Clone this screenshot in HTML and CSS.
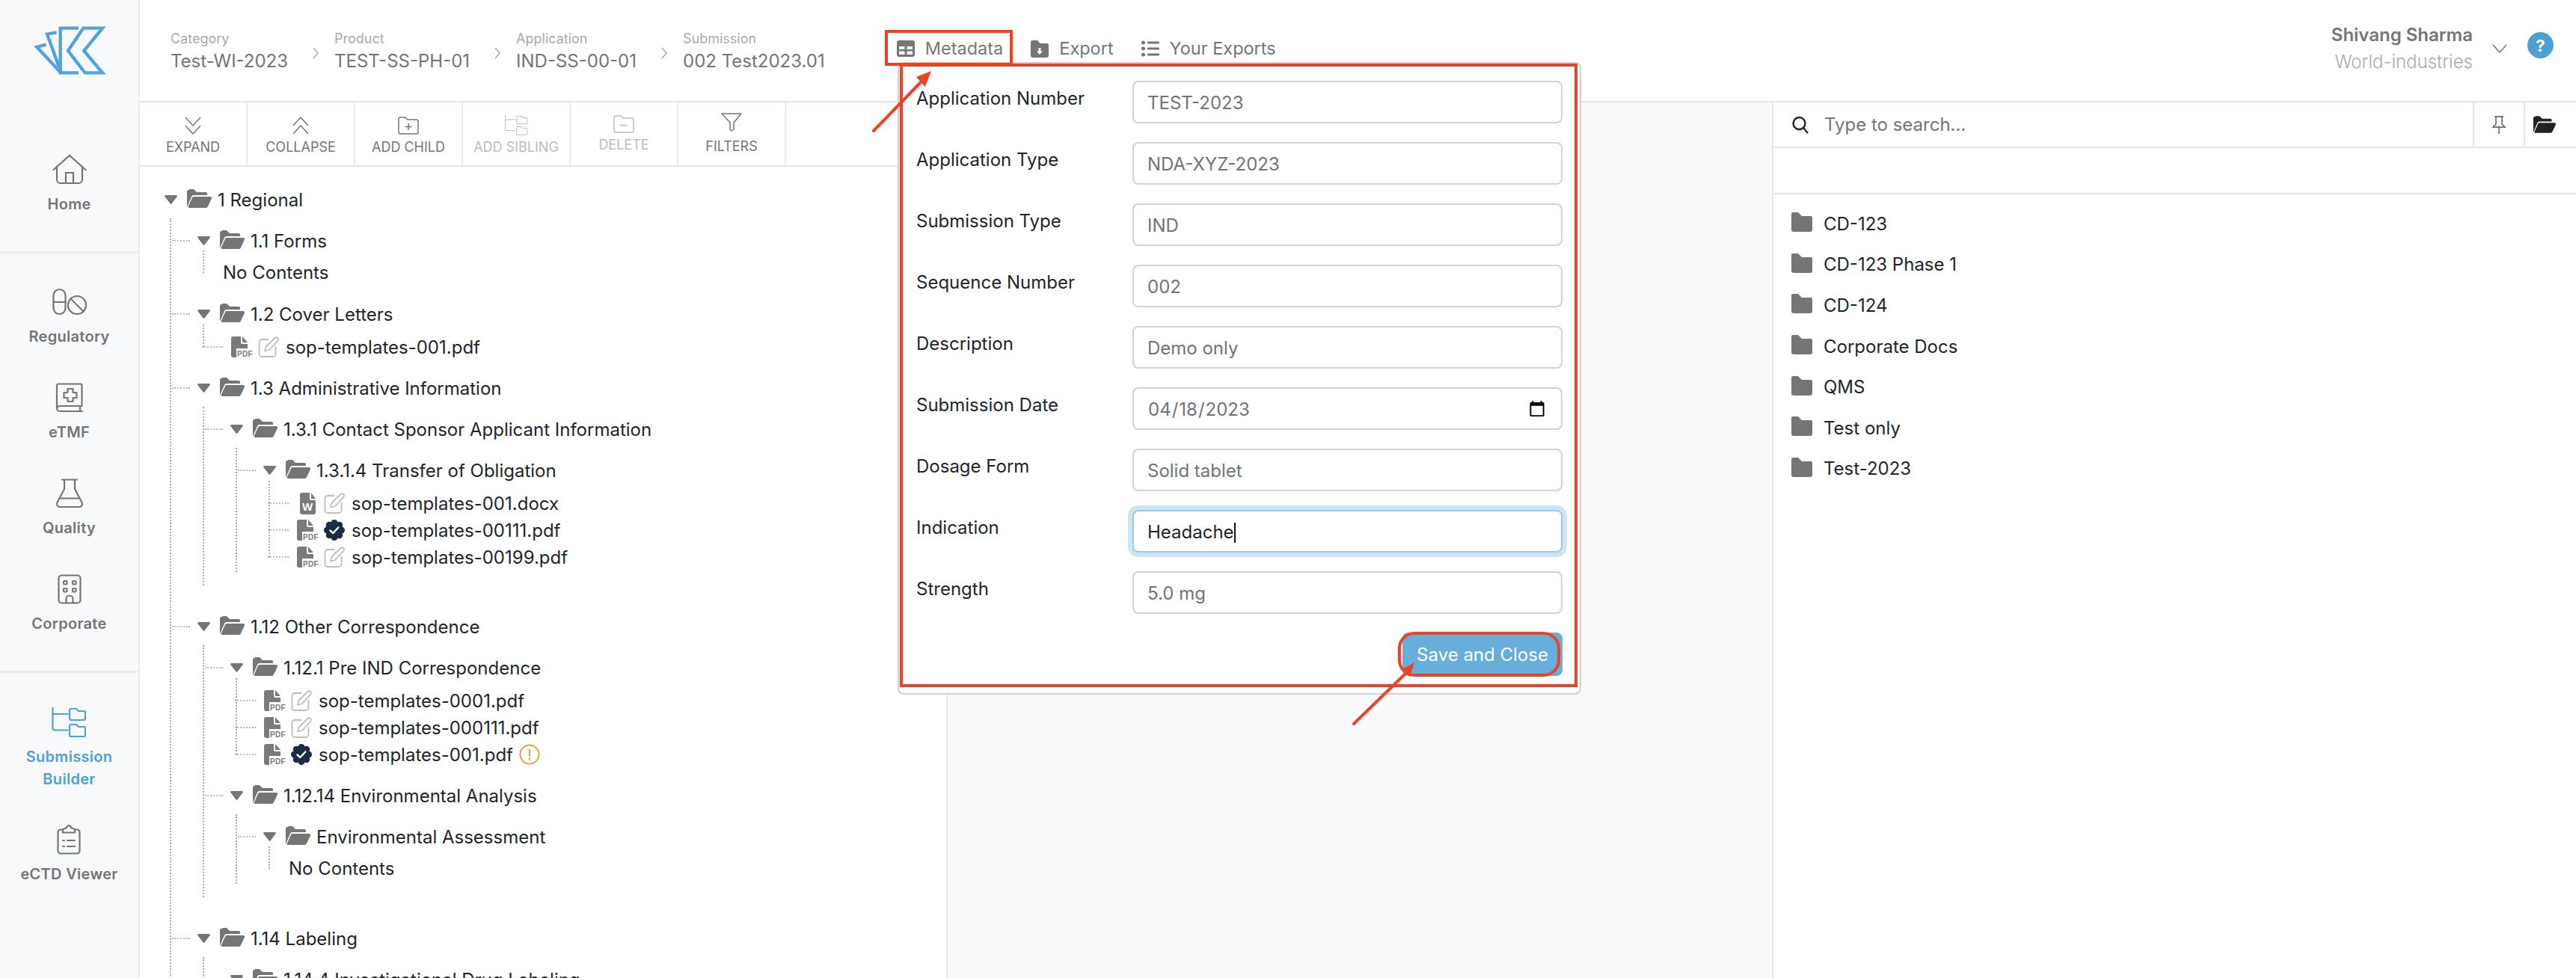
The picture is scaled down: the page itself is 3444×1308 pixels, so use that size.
FILE: index.html
```html
<!DOCTYPE html>
<html lang="en">
<head>
<meta charset="utf-8">
<title>Submission Builder</title>
<link rel="stylesheet" href="styles.css">
</head>
<body>
<svg class="defs" width="0" height="0" aria-hidden="true">
  <symbol id="folder-open" viewBox="0 0 33 25"><path d="M0 3a2 2 0 0 1 2-2h1V0h6l4 4h12a2 2 0 0 1 2 2v2H9a3 3 0 0 0-3 2L0 24z"/><path d="M9 10h22a2 2 0 0 1 2 2.600L28 23a3 3 0 0 1-3 2H3a2 2 0 0 1-1.500-1.500L7 11.500A2 2 0 0 1 9 10z"/></symbol>
  <symbol id="folder-closed" viewBox="0 0 28 26"><path d="M0 2a2 2 0 0 1 2-2h7l5 5h12a2 2 0 0 1 2 2v16a3 3 0 0 1-3 3H3a3 3 0 0 1-3-3z"/></symbol>
  <symbol id="caret" viewBox="0 0 17 12"><path d="M1.500 0h14a1.300 1.300 0 0 1 1 2.200L9.500 11.200a1.200 1.200 0 0 1-2 0L.500 2.200a1.300 1.300 0 0 1 1-2.200z"/></symbol>
  <symbol id="pdf" viewBox="0 0 28 29"><path fill="#7a7a7a" d="M3 0h10v8a2 2 0 0 0 2 2h7v18H3a3 3 0 0 1-3-3V3a3 3 0 0 1 3-3zM15 0l7 8h-7z"/><rect x="7" y="16" width="21" height="13" fill="#fff"/></symbol>
  <symbol id="word" viewBox="0 0 21 29"><path fill="#7a7a7a" d="M3 0h10v8a2 2 0 0 0 2 2h6v16a3 3 0 0 1-3 3H3a3 3 0 0 1-3-3V3a3 3 0 0 1 3-3zM15 0l6 8h-6z"/></symbol>
  <symbol id="edit" viewBox="0 0 28 28"><g fill="none" stroke="#bdbdbd" stroke-width="1.800" stroke-linejoin="round"><path d="M14 4H5a3.500 3.500 0 0 0-3.500 3.500v16A3.500 3.500 0 0 0 5 27h15a3.500 3.500 0 0 0 3.500-3.500V13"/><path d="M9 19.500l1.500-6L22.500 2c1.200-1 2.700-.8 3.700.2s1.100 2.600 0 3.700L15 18z"/></g></symbol>
  <symbol id="badge" viewBox="0 0 28 28"><g fill="#1a2b44"><circle cx="14" cy="14" r="11"/><circle cx="14" cy="4.500" r="4.500"/><circle cx="14" cy="23.500" r="4.500"/><circle cx="4.500" cy="14" r="4.500"/><circle cx="23.500" cy="14" r="4.500"/><circle cx="7.300" cy="7.300" r="4.500"/><circle cx="20.700" cy="7.300" r="4.500"/><circle cx="7.300" cy="20.700" r="4.500"/><circle cx="20.700" cy="20.700" r="4.500"/></g><path d="M8.500 14.500l3.800 3.500 7-7.500" fill="none" stroke="#fff" stroke-width="2.400" stroke-linecap="round" stroke-linejoin="round"/></symbol>
  <symbol id="builder" viewBox="0 0 46 40"><path d="M1.500 0v28a2.500 2.500 0 0 0 2.500 2.500h17.500M1.500 9h20M24 4a2 2 0 0 1 2-2h7l3 3h7a2 2 0 0 1 2 2v8a2 2 0 0 1-2 2H26a2 2 0 0 1-2-2zM24 25a2 2 0 0 1 2-2h7l3 3h7a2 2 0 0 1 2 2v9a2 2 0 0 1-2 2H26a2 2 0 0 1-2-2z"/></symbol>
</svg>

<div class="app">
  <nav class="sidebar">
    <section class="side-section side-top">
      <svg class="logo" viewBox="120 100 300 210" width="100" height="70"><g fill="none" stroke="#50a2da" stroke-width="13"><path d="M325 114H402L328 205 402 293H332L264 205z"/><path d="M306 114H233V293H306"/><path d="M218 131L180 138 228 270"/><path d="M176 180L139 190 235 293"/></g></svg>
      <a class="nav-item">
        <svg class="nav-icon" viewBox="-4 0 48 40" width="48" height="40"><path d="M-1.500 20L20 1 41.500 20M3 16v17a5 5 0 0 0 5 5h24a5 5 0 0 0 5-5V16M15 38V24h10v14"/></svg>
        <span>Home</span>
      </a>
    </section>
    <section class="side-section side-mid">
      <a class="nav-item">
        <svg class="nav-icon" viewBox="0 0 52 40" width="52" height="40"><rect x="4.500" y="3" width="16" height="33" rx="8"/><path d="M4.500 20h16"/><circle cx="36" cy="24" r="12"/><path d="M27.500 15.500l17 17"/></svg>
        <span>Regulatory</span>
      </a>
      <a class="nav-item">
        <svg class="nav-icon" viewBox="0 0 40 40" width="40" height="40"><path d="M36.500 31V3.500a2 2 0 0 0-2-2H5a2 2 0 0 0-2 2V34a4 4 0 0 0 4 4h30M3 35a4 4 0 0 1 4-4h29.500M34 31v7"/><path d="M17.500 8h7v5h5v7h-5v5h-7v-5h-5v-7h5z" stroke-linejoin="round"/></svg>
        <span>eTMF</span>
      </a>
      <a class="nav-item">
        <svg class="nav-icon" viewBox="0 0 40 40" width="40" height="40"><path d="M10 1.500h20M13 1.500V14L3.500 32a4 4 0 0 0 3.500 6h26a4 4 0 0 0 3.500-6L27 14V1.500M7.500 26.500h25"/></svg>
        <span>Quality</span>
      </a>
      <a class="nav-item">
        <svg class="nav-icon" viewBox="0 0 40 40" width="40" height="40"><rect x="5.500" y="1.500" width="29" height="37" rx="4"/><rect x="12" y="9" width="4.500" height="4.500" rx="1"/><rect x="24" y="9" width="4.500" height="4.500" rx="1"/><rect x="12" y="19" width="4.500" height="4.500" rx="1"/><rect x="24" y="19" width="4.500" height="4.500" rx="1"/><path d="M15.500 38V33a4.500 4.500 0 0 1 9 0v5"/></svg>
        <span>Corporate</span>
      </a>
    </section>
    <section class="side-section side-bottom">
      <a class="nav-item nav-active">
        <svg class="nav-icon" width="46" height="40"><use href="#builder"/></svg>
        <span>Submission<br>Builder</span>
      </a>
      <a class="nav-item">
        <svg class="nav-icon" viewBox="0 0 40 40" width="40" height="40"><path d="M12 6.500H9a3.500 3.500 0 0 0-3.500 3.500v25A3.500 3.500 0 0 0 9 38.500h22a3.500 3.500 0 0 0 3.500-3.500V10A3.500 3.500 0 0 0 31 6.500h-3"/><path d="M12 10.500V6l4.500-1.500C17.500 2 19 1 20 1s2.500 1 3.500 3.500L28 6v4.500z" stroke-linejoin="round"/><path d="M18 21h10M18 29h10M12 21h2M12 29h2"/></svg>
        <span>eCTD Viewer</span>
      </a>
    </section>
  </nav>

  <div class="main">
    <header class="topbar">
      <div class="crumbs">
        <div class="crumb"><small>Category</small><strong>Test-WI-2023</strong></div>
        <svg class="crumb-sep" viewBox="0 0 10 16" width="10" height="16"><path d="M2 1l6 7-6 7"/></svg>
        <div class="crumb"><small>Product</small><strong>TEST-SS-PH-01</strong></div>
        <svg class="crumb-sep" viewBox="0 0 10 16" width="10" height="16"><path d="M2 1l6 7-6 7"/></svg>
        <div class="crumb"><small>Application</small><strong>IND-SS-00-01</strong></div>
        <svg class="crumb-sep" viewBox="0 0 10 16" width="10" height="16"><path d="M2 1l6 7-6 7"/></svg>
        <div class="crumb"><small>Submission</small><strong>002 Test2023.01</strong></div>
      </div>
      <div class="tabs">
        <a class="tab"><svg viewBox="0 0 24 24" width="24" height="24"><path fill-rule="evenodd" d="M3 1h18a3 3 0 0 1 3 3v16a3 3 0 0 1-3 3H3a3 3 0 0 1-3-3V4a3 3 0 0 1 3-3zm0 8v4h7.500V9zm10.500 0v4H21V9zM3 15.500V20h7.500v-4.500zm10.500 0V20H21v-4.500z"/></svg>Metadata</a>
        <a class="tab"><svg viewBox="0 0 24 24" width="24" height="24"><path fill-rule="evenodd" d="M0 3a2 2 0 0 1 2-2h7l3.500 4H21a3 3 0 0 1 3 3v13a3 3 0 0 1-3 3H3a3 3 0 0 1-3-3zm10.500 8v4.500H8l4 4.500 4-4.500h-2.500V11z"/></svg>Export</a>
        <a class="tab"><svg viewBox="0 0 24 24" width="24" height="24"><circle cx="2.500" cy="4" r="2.500"/><circle cx="2.500" cy="12" r="2.500"/><circle cx="2.500" cy="20" r="2.500"/><rect x="8" y="2.500" width="16" height="3" rx="1"/><rect x="8" y="10.500" width="16" height="3" rx="1"/><rect x="8" y="18.500" width="16" height="3" rx="1"/></svg>Your Exports</a>
      </div>
      <div class="account">
        <div class="account-text"><strong>Shivang Sharma</strong><span>World-industries</span></div>
        <svg class="account-chevron" viewBox="0 0 20 12" width="20" height="12"><path d="M1 1l9 10 9-10"/></svg>
        <span class="help">?</span>
      </div>
    </header>

    <div class="panes">
      <section class="tree-pane">
        <div class="toolbar">
          <button class="tool"><svg viewBox="0 0 22 24" width="22" height="24"><path d="M1 1l10 11L21 1M1 12l10 11 10-11"/></svg>EXPAND</button>
          <button class="tool"><svg viewBox="0 0 22 24" width="22" height="24"><path d="M1 12L11 1l10 11M1 23l10-11 10 11"/></svg>COLLAPSE</button>
          <button class="tool"><svg viewBox="0 0 28 24" width="28" height="24"><path d="M1 3a2 2 0 0 1 2-2h7l3 3h12a2 2 0 0 1 2 2v15a2 2 0 0 1-2 2H3a2 2 0 0 1-2-2zM14 9v9M9.500 13.500h9"/></svg>ADD CHILD</button>
          <button class="tool tool-off"><svg width="32" height="27" viewBox="0 0 46 40"><use href="#builder" width="46" height="40"/></svg>ADD SIBLING</button>
          <button class="tool tool-off"><svg viewBox="0 0 28 24" width="28" height="24"><path d="M1 3a2 2 0 0 1 2-2h7l3 3h12a2 2 0 0 1 2 2v15a2 2 0 0 1-2 2H3a2 2 0 0 1-2-2zM9.500 13.500h9"/></svg>DELETE</button>
          <button class="tool tool-filter"><svg viewBox="0 0 28 25" width="28" height="25"><path d="M1 1h26L17 13v9l-3 2-2-2v-9z" stroke-linejoin="round"/></svg>FILTERS</button>
        </div>
        <div class="tree">
          <ul class="branch root">
            <li class="node">
              <div class="row"><svg class="caret"><use href="#caret"/></svg><svg class="folder"><use href="#folder-open"/></svg><span>1 Regional</span></div>
              <ul class="branch">
                <li class="node">
                  <div class="row"><svg class="caret"><use href="#caret"/></svg><svg class="folder"><use href="#folder-open"/></svg><span>1.1 Forms</span></div>
                  <ul class="branch leafs"><li class="empty">No Contents</li></ul>
                </li>
                <li class="node">
                  <div class="row"><svg class="caret"><use href="#caret"/></svg><svg class="folder"><use href="#folder-open"/></svg><span>1.2 Cover Letters</span></div>
                  <ul class="branch leafs">
                    <li class="file"><span class="file-icon"><svg><use href="#pdf"/></svg><b class="pdf-tag">PDF</b></span><svg class="act-icon"><use href="#edit"/></svg><span>sop-templates-001.pdf</span></li>
                  </ul>
                </li>
                <li class="node deep">
                  <div class="row"><svg class="caret"><use href="#caret"/></svg><svg class="folder"><use href="#folder-open"/></svg><span>1.3 Administrative Information</span></div>
                  <ul class="branch outer">
                    <li class="node">
                      <div class="row"><svg class="caret"><use href="#caret"/></svg><svg class="folder"><use href="#folder-open"/></svg><span>1.3.1 Contact Sponsor Applicant Information</span></div>
                      <ul class="branch inner">
                        <li class="node">
                          <div class="row"><svg class="caret"><use href="#caret"/></svg><svg class="folder"><use href="#folder-open"/></svg><span>1.3.1.4 Transfer of Obligation</span></div>
                          <ul class="branch leafs">
                            <li class="file"><span class="file-icon file-word"><svg><use href="#word"/></svg><b class="word-tag">W</b></span><svg class="act-icon"><use href="#edit"/></svg><span>sop-templates-001.docx</span></li>
                            <li class="file"><span class="file-icon"><svg><use href="#pdf"/></svg><b class="pdf-tag">PDF</b></span><svg class="act-icon"><use href="#badge"/></svg><span>sop-templates-00111.pdf</span></li>
                            <li class="file"><span class="file-icon"><svg><use href="#pdf"/></svg><b class="pdf-tag">PDF</b></span><svg class="act-icon"><use href="#edit"/></svg><span>sop-templates-00199.pdf</span></li>
                          </ul>
                        </li>
                      </ul>
                    </li>
                  </ul>
                </li>
                <li class="node deep">
                  <div class="row"><svg class="caret"><use href="#caret"/></svg><svg class="folder"><use href="#folder-open"/></svg><span>1.12 Other Correspondence</span></div>
                  <ul class="branch outer">
                    <li class="node">
                      <div class="row"><svg class="caret"><use href="#caret"/></svg><svg class="folder"><use href="#folder-open"/></svg><span>1.12.1 Pre IND Correspondence</span></div>
                      <ul class="branch leafs">
                        <li class="file"><span class="file-icon"><svg><use href="#pdf"/></svg><b class="pdf-tag">PDF</b></span><svg class="act-icon"><use href="#edit"/></svg><span>sop-templates-0001.pdf</span></li>
                        <li class="file"><span class="file-icon"><svg><use href="#pdf"/></svg><b class="pdf-tag">PDF</b></span><svg class="act-icon"><use href="#edit"/></svg><span>sop-templates-000111.pdf</span></li>
                        <li class="file"><span class="file-icon"><svg><use href="#pdf"/></svg><b class="pdf-tag">PDF</b></span><svg class="act-icon"><use href="#badge"/></svg><span>sop-templates-001.pdf</span><svg class="warn" viewBox="0 0 28 28" width="28" height="28"><circle cx="14" cy="14" r="12.500"/><path d="M14 7.500v8M14 19.500v1.500"/></svg></li>
                      </ul>
                    </li>
                    <li class="node">
                      <div class="row"><svg class="caret"><use href="#caret"/></svg><svg class="folder"><use href="#folder-open"/></svg><span>1.12.14 Environmental Analysis</span></div>
                      <ul class="branch inner">
                        <li class="node">
                          <div class="row"><svg class="caret"><use href="#caret"/></svg><svg class="folder"><use href="#folder-open"/></svg><span>Environmental Assessment</span></div>
                          <ul class="branch leafs"><li class="empty">No Contents</li></ul>
                        </li>
                      </ul>
                    </li>
                  </ul>
                </li>
                <li class="node">
                  <div class="row"><svg class="caret"><use href="#caret"/></svg><svg class="folder"><use href="#folder-open"/></svg><span>1.14 Labeling</span></div>
                  <ul class="branch">
                    <li class="node">
                      <div class="row"><svg class="caret"><use href="#caret"/></svg><svg class="folder"><use href="#folder-open"/></svg><span>1.14.4 Investigational Drug Labeling</span></div>
                    </li>
                  </ul>
                </li>
              </ul>
            </li>
          </ul>
        </div>
      </section>

      <section class="center-pane"></section>

      <aside class="library">
        <div class="search-row">
          <div class="search">
            <svg viewBox="0 0 24 24" width="24" height="24"><circle cx="10.500" cy="10" r="8"/><path d="M16 16l6 7"/></svg>
            <span>Type to search...</span>
          </div>
          <button class="lib-btn"><svg viewBox="0 0 20 24" width="20" height="24"><path d="M4 1h12M6 1v10l-4 4h16l-4-4V1M10 15v9"/></svg></button>
          <button class="lib-btn lib-folder"><svg width="30" height="23"><use href="#folder-open"/></svg></button>
        </div>
        <div class="lib-spacer"></div>
        <ul class="lib-list">
          <li><svg><use href="#folder-closed"/></svg>CD-123</li>
          <li><svg><use href="#folder-closed"/></svg>CD-123 Phase 1</li>
          <li><svg><use href="#folder-closed"/></svg>CD-124</li>
          <li><svg><use href="#folder-closed"/></svg>Corporate Docs</li>
          <li><svg><use href="#folder-closed"/></svg>QMS</li>
          <li><svg><use href="#folder-closed"/></svg>Test only</li>
          <li><svg><use href="#folder-closed"/></svg>Test-2023</li>
        </ul>
      </aside>
    </div>
  </div>
</div>

<form class="popover">
  <label class="field"><span>Application Number</span><input class="input" value="TEST-2023"></label>
  <label class="field"><span>Application Type</span><input class="input" value="NDA-XYZ-2023"></label>
  <label class="field"><span>Submission Type</span><input class="input" value="IND"></label>
  <label class="field"><span>Sequence Number</span><input class="input" value="002"></label>
  <label class="field"><span>Description</span><input class="input" value="Demo only"></label>
  <label class="field"><span>Submission Date</span><input class="input" type="date" value="2023-04-18"></label>
  <label class="field"><span>Dosage Form</span><input class="input" value="Solid tablet"></label>
  <div class="field"><span>Indication</span><div class="input input-focus">Headache<i class="text-caret"></i></div></div>
  <label class="field"><span>Strength</span><input class="input" value="5.0 mg"></label>
  <div class="form-actions"><button type="button" class="save">Save and Close</button></div>
</form>

<svg class="annotations" viewBox="0 0 3444 1308" width="3444" height="1308" aria-hidden="true">
  <g fill="none" stroke="#ee4225" stroke-width="4">
    <rect x="1185" y="42" width="167" height="44"/>
    <rect x="1205" y="87" width="902" height="830"/>
    <rect x="1871" y="847" width="213" height="56" rx="20"/>
    <path d="M1168 175L1232 109M1810 968L1880 900" stroke-linecap="round"/>
  </g>
  <path d="M1245 95L1237 116 1225 103zM1891 886L1885 905 1875 895z" fill="#ee4225"/>
</svg>
</body>
</html>
```
FILE: styles.css
```css
* { box-sizing: border-box; }
html, body { margin: 0; height: 1308px; overflow: hidden; }
body { position: relative; font-family: Inter, "Liberation Sans", sans-serif; font-size: 24px; color: #212529; background: #fff; }
ul { list-style: none; margin: 0; padding: 0; }
button { font: inherit; border: 0; background: none; padding: 0; }
.defs { position: absolute; }

.app { display: grid; grid-template-columns: 187px 1fr; height: 1308px; }

/* sidebar */
.sidebar { background: #f8f9fb; border-right: 2px solid #e9ebee; display: flex; flex-direction: column; }
.side-section { display: flex; flex-direction: column; align-items: center; }
.side-top { height: 339px; padding-top: 33px; border-bottom: 3px solid #e9ebee; gap: 104px; }
.side-mid { height: 561px; padding-top: 45px; border-bottom: 3px solid #e9ebee; gap: 47px; }
.side-bottom { padding-top: 46px; gap: 46px; }
.logo { display: block; flex: none; }
.nav-item { display: flex; flex-direction: column; align-items: center; gap: 11px; font-size: 20px; line-height: 30px; font-weight: 600; color: #757575; text-align: center; letter-spacing: .3px; }
.nav-icon { display: block; fill: none; stroke: #757575; stroke-width: 2.200; overflow: visible; stroke-linecap: round; }
.nav-active { color: #4fa0d8; }
.nav-active .nav-icon { stroke: #4fa0d8; }

/* header */
.main { display: flex; flex-direction: column; min-width: 0; }
.topbar { height: 137px; flex: none; display: flex; align-items: center; padding: 0 30px 0 41px; border-bottom: 2px solid #e3e5e8; }
.crumbs { display: flex; align-items: center; gap: 26px; padding-top: 2px; }
.crumb { display: flex; flex-direction: column; gap: 5px; }
.crumb small { font-size: 18px; line-height: 22px; color: #aaa; }
.crumb strong { font-size: 24px; line-height: 28px; font-weight: 400; color: #757575; }
.crumb-sep { fill: none; stroke: #aaa; stroke-width: 1.500; margin: 4px -6px 0 6px; }
.tabs { display: flex; gap: 37px; margin-left: 96px; padding-bottom: 5px; }
.tab { display: flex; align-items: center; gap: 14px; color: #757575; font-size: 23.500px; line-height: 30px; }
.tab svg { fill: #757575; }
.account { margin-left: auto; display: flex; align-items: center; padding-bottom: 6px; }
.account-text { display: flex; flex-direction: column; align-items: flex-end; gap: 8px; }
.account-text strong { font-size: 24px; line-height: 28px; font-weight: 600; color: #757575; }
.account-text span { font-size: 24px; line-height: 28px; font-weight: 300; color: #aaa; }
.account-chevron { fill: none; stroke: #757575; stroke-width: 1.500; margin: 0 27px 0 26px; }
.help { width: 35px; height: 35px; border-radius: 50%; background: #4e9fd6; color: #fff; font-weight: 700; font-size: 22px; display: flex; align-items: center; justify-content: center; margin-bottom: 8px; }

/* panes */
.panes { flex: 1; display: grid; grid-template-columns: 1080px 1103px 1fr; min-height: 0; }
.tree-pane { display: flex; flex-direction: column; border-right: 2px solid #e5e7ea; min-height: 0; overflow: hidden; }
.center-pane { background: #f8f9fb; }
.toolbar { flex: none; height: 86px; display: flex; border-bottom: 2px solid #e3e5e8; }
.tool { width: 144px; border-right: 2px solid #e9ebee; display: flex; flex-direction: column; align-items: center; justify-content: flex-start; padding-top: 19px; gap: 5px; font-size: 18px; line-height: 24px; color: #757575; white-space: nowrap; }
.tool svg { fill: none; stroke: #757575; stroke-width: 1.500; display: block; flex: none; }
.tool-off { color: #bdbdbd; padding-top: 17px; gap: 4px; }
.tool-off svg { stroke: #bdbdbd; }
.tool-filter { padding-top: 14px; gap: 8px; }

/* tree */
.tree { flex: 1; min-height: 0; overflow: hidden; padding: 26px 0 0 33px; }
.row { display: flex; align-items: center; height: 36px; }
.caret { width: 17px; height: 12px; fill: #757575; flex: none; margin-right: 13px; }
.folder { width: 33px; height: 25px; fill: #757575; flex: none; margin-right: 8px; margin-top: -4px; }
.branch { position: relative; padding-left: 44px; }
.branch::before { content: ""; position: absolute; left: 7px; top: -12px; bottom: 0; border-left: 2px dotted #aaa; }
.root { padding-left: 0; }
.root::before { display: none; }
.leafs::before { bottom: 18px; }
.inner { padding-bottom: 2px; }
.outer { padding-bottom: 18px; }
.node { position: relative; margin-top: 19px; }
.root > .node { margin-top: 0; }
.deep { padding-bottom: 18px; }
.branch > .node::before, .file::before { content: ""; position: absolute; left: -34px; top: 17px; width: 24px; border-top: 2px dotted #bbb; }
.root > .node::before { display: none; }
.file { position: relative; display: flex; align-items: center; height: 36px; padding-left: 1px; }
.file::before { left: -38px; width: 28px; }
.leafs > .file:first-child { margin-top: 8px; }
.empty { height: 36px; margin: 7px 0 0 -10px; line-height: 36px; }
.file-icon { position: relative; display: block; width: 28px; height: 29px; flex: none; margin-right: 8px; }
.file-icon svg { display: block; width: 100%; height: 100%; }
.file-word { width: 21px; margin: 0 11px 0 4px; }
.pdf-tag { position: absolute; left: 8px; bottom: -1px; font: 700 10px/13px "Liberation Sans", sans-serif; color: #7a7a7a; letter-spacing: .3px; }
.word-tag { position: absolute; left: 3px; bottom: 3px; font: 700 15px/15px "Liberation Sans", sans-serif; color: #fff; }
.act-icon { width: 28px; height: 28px; flex: none; margin-right: 9px; }
.warn { fill: none; stroke: #e2a33a; stroke-width: 2; flex: none; margin-left: 8px; stroke-linecap: round; }

/* library */
.library { border-left: 2px solid #e5e7ea; display: flex; flex-direction: column; min-width: 0; background: #fff; margin-left: -1px; }
.search-row { display: flex; height: 61px; border-bottom: 2px solid #e3e5e8; flex: none; }
.search { flex: 1; display: flex; align-items: center; gap: 20px; padding-left: 24px; color: #757575; }
.search svg { fill: none; stroke: #222; stroke-width: 2.400; }
.lib-btn { width: 68px; border-left: 2px solid #e3e5e8; display: flex; align-items: center; justify-content: center; }
.lib-btn svg { fill: none; stroke: #555; stroke-width: 1.400; }
.lib-folder { width: 70px; padding-right: 16px; }
.lib-folder svg { fill: #222; stroke: none; }
.lib-spacer { height: 62px; border-bottom: 2px solid #e3e5e8; flex: none; }
.lib-list { padding-top: 12px; }
.lib-list li { display: flex; align-items: center; height: 54.600px; padding-left: 24px; gap: 15px; }
.lib-list svg { width: 28px; height: 26px; fill: #757575; flex: none; margin-top: -4px; }

/* popover */
.popover { position: absolute; left: 1200px; top: 83px; width: 914px; height: 846px; background: #fff; border: 2px solid #cfd1d4; border-radius: 8px; padding: 23px 23px 0 23px; display: flex; flex-direction: column; gap: 25px; }
.field { display: grid; grid-template-columns: 289px 1fr; height: 57px; }
.field > span { line-height: 47px; }
.input { width: 100%; height: 57px; border: 2px solid #ced4da; border-radius: 8px; padding: 1px 18px 0; font: 24px/53px Inter, "Liberation Sans", sans-serif; color: #6f7478; background: #fff; outline: none; }
.input-focus { color: #212529; border-color: #9cc8e8; box-shadow: 0 0 0 6px #cfe4f3; }
.text-caret { display: inline-block; width: 2px; height: 27px; background: #111; vertical-align: -6px; margin-left: 0; }
.form-actions { display: flex; justify-content: flex-end; }
.save { width: 214px; height: 58px; border-radius: 8px; background: #67aedb; color: #fff; font-size: 24px; }

.annotations { position: absolute; left: 0; top: 0; pointer-events: none; }
```
